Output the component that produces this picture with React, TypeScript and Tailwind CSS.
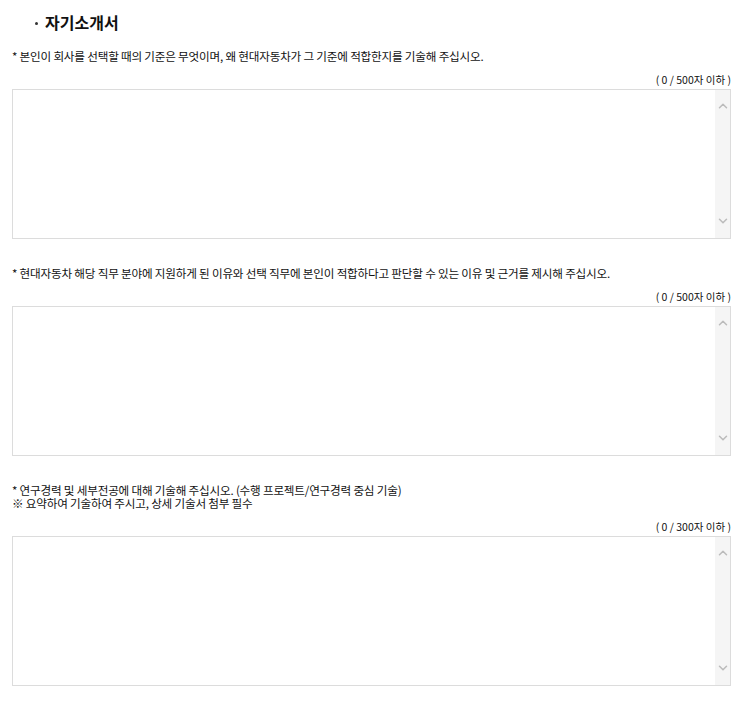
import { ChevronDown, ChevronUp } from "lucide-react";

const QUESTIONS = [
  {
    lines: [
      "* 본인이 회사를 선택할 때의 기준은 무엇이며, 왜 현대자동차가 그 기준에 적합한지를 기술해 주십시오.",
    ],
    limit: 500,
  },
  {
    lines: [
      "* 현대자동차 해당 직무 분야에 지원하게 된 이유와 선택 직무에 본인이 적합하다고 판단할 수 있는 이유 및 근거를 제시해 주십시오.",
    ],
    limit: 500,
  },
  {
    lines: [
      "* 연구경력 및 세부전공에 대해 기술해 주십시오. (수행 프로젝트/연구경력 중심 기술)",
      "※ 요약하여 기술하여 주시고, 상세 기술서 첨부 필수",
    ],
    limit: 300,
  },
];

function AnswerBox() {
  return (
    <div className="flex h-[150px] border border-[#dcdcdc] bg-white">
      <div className="flex-1" />
      <div className="flex w-[15px] flex-col items-center justify-between bg-[#f5f5f5] pt-[9px] pb-[10px]">
        <ChevronUp size={14} strokeWidth={2.6} className="text-[#bcbcbc]" />
        <ChevronDown size={14} strokeWidth={2.6} className="text-[#bcbcbc]" />
      </div>
    </div>
  );
}

export default function App() {
  return (
    <div
      className="w-[743px] bg-white px-[12px] pt-[10px] pb-[16px] text-[#111]"
      style={{ fontFamily: '"Noto Sans CJK KR", "Noto Sans", sans-serif' }}
    >
      {/* Title */}
      <div className="flex items-center pl-[23px]">
        <span className="mr-[7px] mt-[3px] h-[3px] w-[3px] rounded-full bg-[#333]" />
        <h2 className="text-[16px] font-bold leading-[24px]">자기소개서</h2>
      </div>

      <div className="mt-[16px] flex flex-col gap-[28px]">
        {QUESTIONS.map((q, i) => (
          <div key={i}>
            <p className="text-[11.6px] leading-[13px] tracking-[-0.2px]">
              {q.lines.map((line) => (
                <span key={line} className="block">
                  {line}
                </span>
              ))}
            </p>
            <div className="mt-[11px] mb-[3px] text-right text-[10.5px] leading-[12px]">
              ( 0 / {q.limit}자 이하 )
            </div>
            <AnswerBox />
          </div>
        ))}
      </div>
    </div>
  );
}
